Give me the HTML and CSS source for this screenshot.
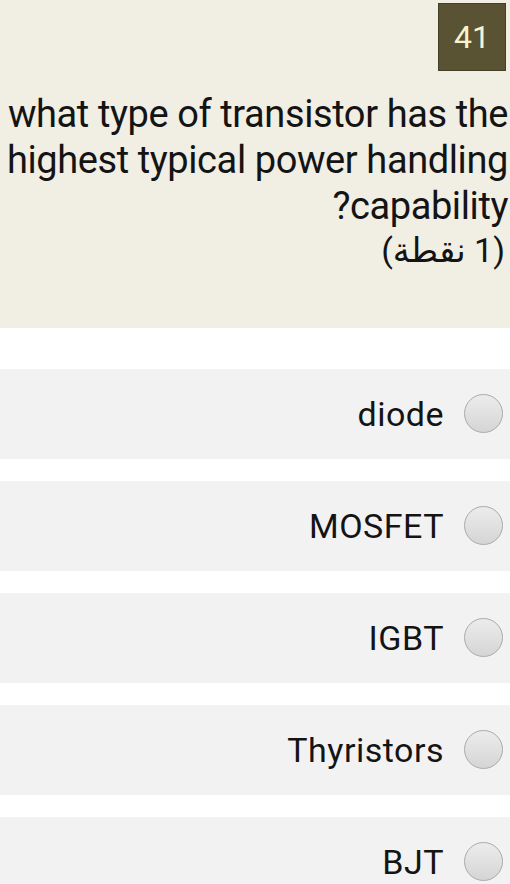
FILE: index.html
```html
<!DOCTYPE html>
<html lang="ar">
<head>
<meta charset="utf-8">
<link rel="stylesheet" href="styles.css">
</head>
<body>
<div class="panel">
  <div class="badge-row"><div class="badge">41</div></div>
  <div class="question">
    <div>what type of transistor has the highest typical power handling capability?</div>
    <div class="points">(1 نقطة)</div>
  </div>
</div>
<div class="options">
  <label class="option"><span class="label">diode</span><span class="radio"></span></label>
  <label class="option"><span class="label">MOSFET</span><span class="radio"></span></label>
  <label class="option"><span class="label">IGBT</span><span class="radio"></span></label>
  <label class="option"><span class="label">Thyristors</span><span class="radio"></span></label>
  <label class="option"><span class="label">BJT</span><span class="radio"></span></label>
</div>
</body>
</html>
```
FILE: styles.css
```css
html, body {
  margin: 0;
  padding: 0;
  background: #ffffff;
  font-family: Roboto, "DejaVu Sans", sans-serif;
  color: #141414;
}
.panel {
  background: #f1eee4;
  height: 328px;
  box-sizing: border-box;
  padding: 3px 4px 0 0;
}
.badge-row {
  display: flex;
  justify-content: flex-end;
}
.badge {
  width: 68px;
  height: 68px;
  box-sizing: border-box;
  background: #5a5333;
  border: 1px solid #443f27;
  color: #f7f3cf;
  font-size: 32px;
  display: flex;
  align-items: center;
  justify-content: center;
}
.question {
  direction: rtl;
  text-align: right;
  font-size: 38px;
  letter-spacing: -0.4px;
  line-height: 46px;
  margin-top: 20px;
  margin-right: -2px;
}
.points {
  font-size: 34px;
  line-height: 42px;
  letter-spacing: 0;
  margin-right: 3px;
}
.options {
  margin-top: 41px;
  display: flex;
  flex-direction: column;
  gap: 22px;
}
.option {
  height: 90px;
  background: #f2f2f2;
  display: flex;
  align-items: center;
  justify-content: flex-end;
  gap: 20px;
  padding-right: 7px;
  font-size: 34px;
  letter-spacing: 0.5px;
  color: #141414;
}
.radio {
  width: 39px;
  height: 39px;
  box-sizing: border-box;
  border-radius: 50%;
  border: 1.5px solid #aaaaaa;
  background: linear-gradient(#ececec, #d5d5d5);
  margin-top: -2px;
}
```
